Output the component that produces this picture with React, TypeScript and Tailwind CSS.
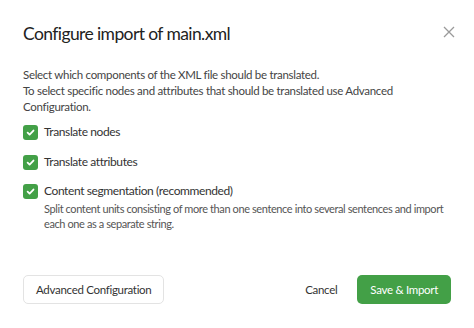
import React from "react";

function Check() {
  return (
    <span className="flex h-[15px] w-[15px] shrink-0 items-center justify-center rounded-[3px] bg-[#43a047]">
      <svg width="9" height="9" viewBox="0 0 10 10" fill="none">
        <path d="M1.8 5.2 L4 7.3 L8.3 2.8" stroke="white" strokeWidth="2" strokeLinecap="round" strokeLinejoin="round" />
      </svg>
    </span>
  );
}

export default function App() {
  return (
    <div className="h-[328px] w-[474px] bg-white px-[23px] text-[#333]" style={{ fontFamily: "Lato, 'Noto Sans', sans-serif" }}>
      <div className="flex items-start justify-between pt-[22px]">
        <h1 className="text-[17.5px] leading-[24px] tracking-[-0.6px] text-[#222]">Configure import of main.xml</h1>
        <svg className="mr-[-4px] mt-[4px]" width="12" height="12" viewBox="0 0 12 12">
          <path d="M1 1 L11 11 M11 1 L1 11" stroke="#9a9a9a" strokeWidth="1.3" />
        </svg>
      </div>
      <p className="mt-[21px] text-[11.5px] leading-[16px] tracking-[-0.3px] text-[#444]">
        Select which components of the XML file should be translated.
        <br />
        To select specific nodes and attributes that should be translated use Advanced Configuration.
      </p>
      <div className="mt-[9px] flex flex-col gap-[14px]">
        <label className="flex items-center gap-[6px] text-[12px] leading-[16px] tracking-[-0.4px] text-[#333]">
          <Check />
          <span>Translate nodes</span>
        </label>
        <label className="flex items-center gap-[6px] text-[12px] leading-[16px] tracking-[-0.4px] text-[#333]">
          <Check />
          <span>Translate attributes</span>
        </label>
        <div className="-mt-[1px]">
          <label className="flex items-center gap-[6px] text-[12px] leading-[16px] tracking-[-0.4px] text-[#333]">
            <Check />
            <span>Content segmentation (recommended)</span>
          </label>
          <p className="mt-[2px] pl-[21px] text-[11px] leading-[15px] tracking-[-0.4px] text-[#555]">
            Split content units consisting of more than one sentence into several sentences and import each one as a separate string.
          </p>
        </div>
      </div>
      <div className="mt-[44px] flex items-center justify-between">
        <button className="h-[29px] rounded-[5px] border border-[#e3e3e3] px-[12px] text-[11.5px] tracking-[-0.3px] text-[#333]">Advanced Configuration</button>
        <div className="flex items-center gap-[20px]">
          <button className="text-[11.5px] tracking-[-0.3px] text-[#333]">Cancel</button>
          <button className="h-[29px] rounded-[5px] bg-[#43a047] px-[13px] text-[11.5px] tracking-[-0.3px] text-white">Save &amp; Import</button>
        </div>
      </div>
    </div>
  );
}
